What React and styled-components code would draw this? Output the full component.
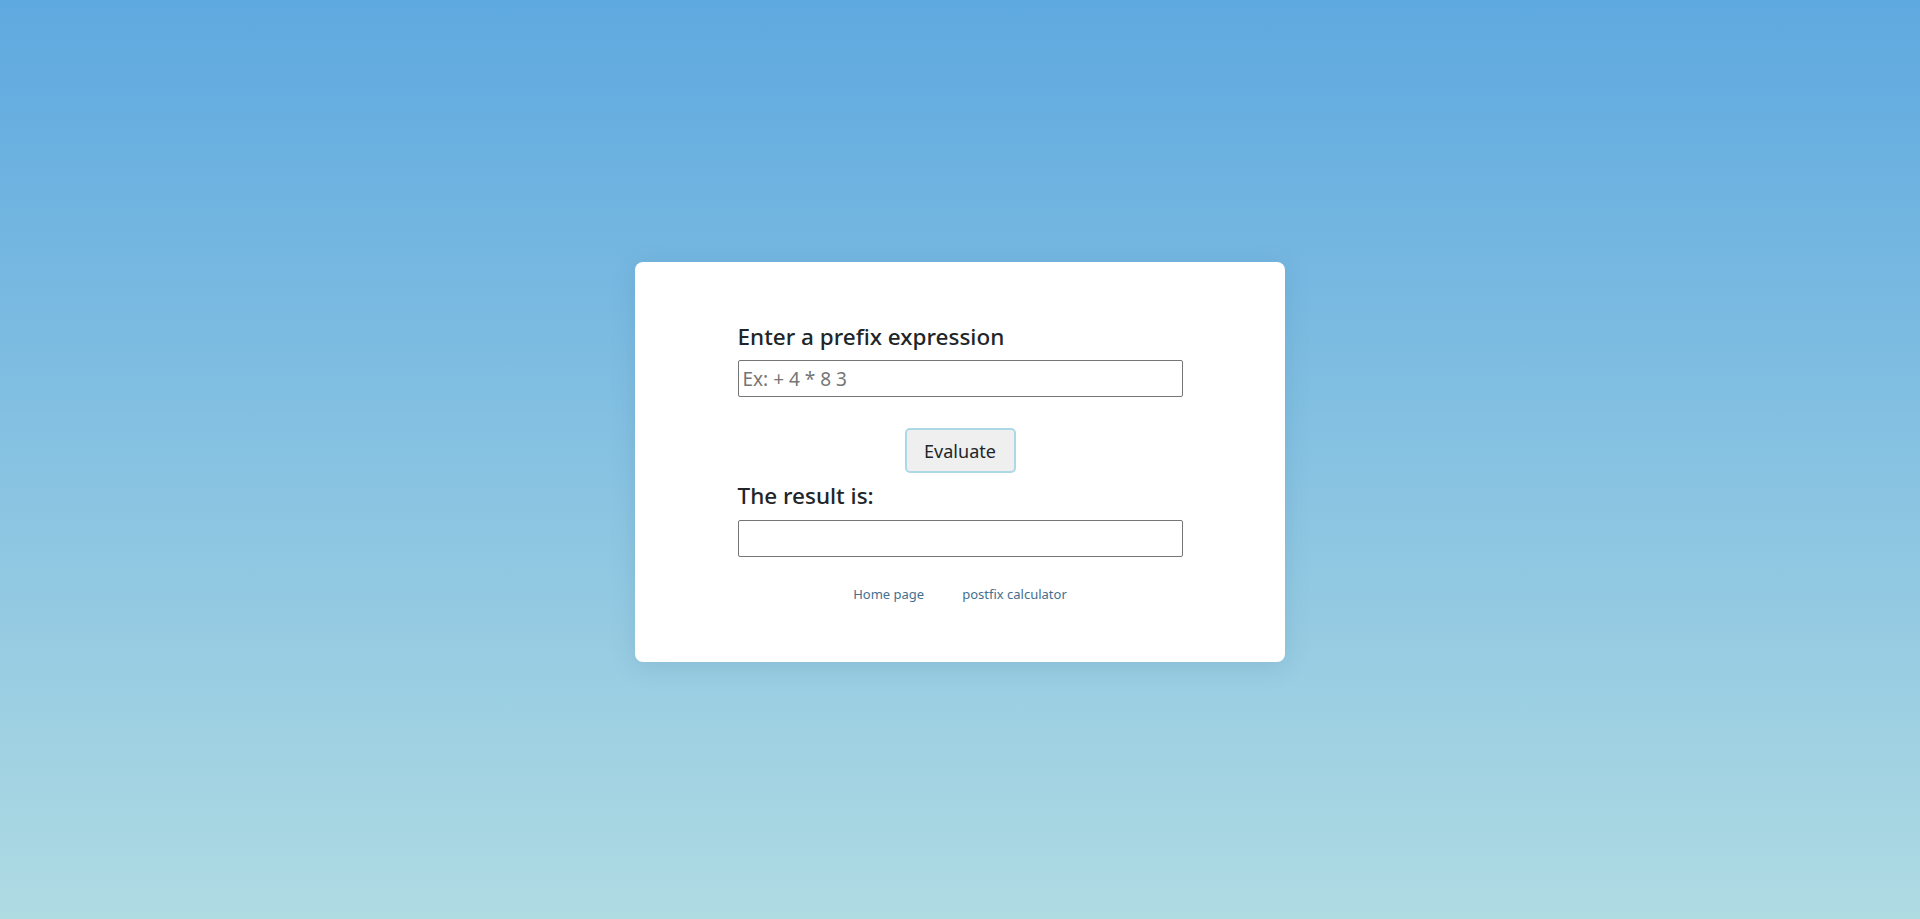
import React from 'react';
import styled, { createGlobalStyle } from 'styled-components';

const GlobalStyle = createGlobalStyle`
    html, body {
        margin: 0;
        padding: 0;
    }
    body {
        font-family: "Segoe UI", "Noto Sans", sans-serif;
        color: #212529;
    }
`

const Page = styled.div`
    box-sizing: border-box;
    min-height: 919px;
    padding-top: 5px;
    display: flex;
    align-items: center;
    justify-content: center;
    background: linear-gradient(to bottom, #5ea9e0, #afdbe3);
`

const Card = styled.div`
    box-sizing: border-box;
    width: 650px;
    height: 400px;
    padding-top: 60px;
    background-color: #ffffff;
    border-radius: 8px;
    box-shadow: 0px 4px 24px rgba(60, 110, 150, 0.18);
    display: flex;
    flex-direction: column;
    align-items: center;
`

const Form = styled.div`
    width: 445px;
    display: flex;
    flex-direction: column;
`

const Label = styled.h4`
    margin: 0 0 ${props => props.gap || 9}px 0;
    font-size: 22.5px;
    font-weight: 500;
    line-height: 29px;
    color: #212529;
`

const TextBox = styled.input`
    box-sizing: border-box;
    width: 100%;
    height: 37px;
    padding: 1px 4px;
    font-family: inherit;
    font-size: 19px;
    color: #212529;
    border: 1px solid #767676;
    border-radius: 2px;
    background: #ffffff;
    &::placeholder {
        color: #757575;
    }
`

const ButtonRow = styled.div`
    display: flex;
    justify-content: center;
    margin: 31px 0 8px 0;
`

const EvalButton = styled.button`
    box-sizing: border-box;
    width: 111px;
    height: 45px;
    font-family: inherit;
    font-size: 18px;
    color: #212529;
    background-color: #efefef;
    border: 2px solid #add8e6;
    border-radius: 5px;
    cursor: pointer;
`

const Links = styled.div`
    display: flex;
    justify-content: center;
    gap: 38px;
    margin-top: 27px;
`

const NavLink = styled.a`
    font-size: 13px;
    line-height: 20px;
    color: #44708f;
    text-decoration: none;
`

function App() {
    const [expression, setExpression] = React.useState('');
    const [result, setResult] = React.useState('');

    // evaluate prefix: scan right to left with a stack
    const evaluate = () => {
        const tokens = expression.trim().split(/\s+/).filter(t => t.length);
        const stack = [];
        for (let i = tokens.length - 1; i >= 0; i--) {
            const t = tokens[i];
            if ('+-*/'.includes(t) && t.length === 1) {
                const a = stack.pop();
                const b = stack.pop();
                if (a === undefined || b === undefined) {
                    setResult('Invalid expression');
                    return;
                }
                if (t === '+') stack.push(a + b);
                if (t === '-') stack.push(a - b);
                if (t === '*') stack.push(a * b);
                if (t === '/') stack.push(a / b);
            } else {
                stack.push(parseFloat(t));
            }
        }
        setResult(stack.length === 1 && !isNaN(stack[0]) ? String(stack[0]) : 'Invalid expression');
    };

    return (
        <Page>
            <GlobalStyle />
            <Card>
                <Form>
                    <Label>Enter a prefix expression</Label>
                    <TextBox
                        type="text"
                        placeholder="Ex: + 4 * 8 3"
                        value={expression}
                        onChange={ev => setExpression(ev.target.value)}
                    />
                    <ButtonRow>
                        <EvalButton onClick={evaluate}>Evaluate</EvalButton>
                    </ButtonRow>
                    <Label gap={10}>The result is:</Label>
                    <TextBox type="text" readOnly value={result} />
                    <Links>
                        <NavLink href="#">Home page</NavLink>
                        <NavLink href="#">postfix calculator</NavLink>
                    </Links>
                </Form>
            </Card>
        </Page>
    );
}

export default App;
